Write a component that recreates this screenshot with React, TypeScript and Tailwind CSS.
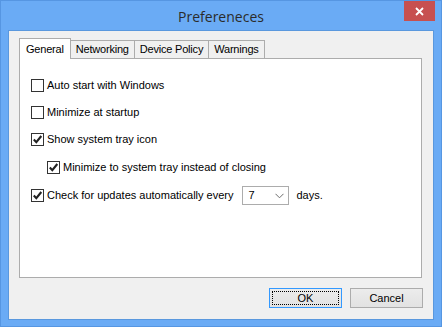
import React, { useState } from 'react'

const tabs = ['General', 'Networking', 'Device Policy', 'Warnings']

function Check({ checked }: { checked: boolean }) {
  return (
    <span className="w-[13px] h-[13px] border border-[#333333] bg-white flex items-center justify-center shrink-0">
      {checked && (
        <svg width="11" height="11" viewBox="0 0 11 11">
          <path d="M1.8 5.6 L4.3 8.2 L9.3 2" fill="none" stroke="#222" strokeWidth="2.1" />
        </svg>
      )}
    </span>
  )
}

function Option({ label, checked, className = '' }: { label: string; checked: boolean; className?: string }) {
  return (
    <label className={`flex items-center gap-[3px] h-[13px] ${className}`}>
      <Check checked={checked} />
      <span>{label}</span>
    </label>
  )
}

export default function App() {
  const [active] = useState(0)

  return (
    <div
      className="w-[442px] h-[327px] bg-[#6aabf5] border border-[#5696e2] flex flex-col text-[11px] text-[#000]"
      style={{ fontFamily: '"Liberation Sans", Arial, sans-serif' }}
    >
      {/* Title bar */}
      <div className="relative h-[29px] flex items-center justify-center">
        <span
          className="text-[14px] text-[#2b2b2b] pt-[1px]"
          style={{ fontFamily: '"Open Sans", "Noto Sans", sans-serif' }}
        >
          Prefereneces
        </span>
        <div className="absolute right-[6px] top-0 w-[31px] h-[20px] bg-[#c75050] flex items-center justify-center">
          <svg width="9" height="9" viewBox="0 0 9 9">
            <path d="M1 1 L8 8 M8 1 L1 8" stroke="#fff" strokeWidth="1.8" />
          </svg>
        </div>
      </div>

      {/* Client area */}
      <div className="mx-[7px] h-[290px] bg-[#f0f0f0] border border-[#5a98de] flex flex-col pl-[10px] pr-[11px]">
        {/* Tabs */}
        <div className="flex items-end h-[27px] pt-[7px] tracking-[-0.2px]">
          {tabs.map((t, i) =>
            i === active ? (
              <div
                key={t}
                className="h-[21px] px-[6px] bg-white border border-[#acacac] border-b-0 -mb-px relative z-10 flex items-start pt-[2px]"
              >
                {t}
              </div>
            ) : (
              <div
                key={t}
                className="h-[18px] px-[5px] bg-[#f0f0f0] border border-[#acacac] border-b-0 border-l-0 flex items-center"
              >
                {t}
              </div>
            )
          )}
        </div>

        {/* Tab panel */}
        <div className="h-[220px] bg-white border border-[#acacac] flex flex-col pt-[20px] pl-[11px] gap-[14px]">
          <Option label="Auto start with Windows" checked={false} />
          <Option label="Minimize at startup" checked={false} />
          <Option label="Show system tray icon" checked />
          <Option label="Minimize to system tray instead of closing" checked className="pl-[16px] mt-[1px]" />
          <div className="flex items-center gap-[9px] mt-[1px] h-[13px]">
            <Option label="Check for updates automatically every" checked />
            <div className="w-[47px] h-[19px] border border-[#acacac] bg-white flex items-center justify-between pl-[5px] pr-[4px]">
              <span>7</span>
              <svg width="9" height="6" viewBox="0 0 9 6">
                <path d="M0.5 0.8 L4.5 4.8 L8.5 0.8" fill="none" stroke="#6d6d6d" strokeWidth="1" />
              </svg>
            </div>
            <span className="-ml-[2px]">days.</span>
          </div>
        </div>

        {/* Buttons */}
        <div className="flex justify-end gap-[8px] mt-[10px]">
          <button className="w-[73px] h-[20px] border border-[#3399ff] bg-gradient-to-b from-[#ececec] to-[#e2e2e2] p-[2px]">
            <span className="w-full h-full border border-dotted border-[#000] flex items-center justify-center">OK</span>
          </button>
          <button className="w-[73px] h-[20px] border border-[#acacac] bg-gradient-to-b from-[#ececec] to-[#e2e2e2] flex items-center justify-center -mr-px">
            Cancel
          </button>
        </div>
      </div>
    </div>
  )
}
